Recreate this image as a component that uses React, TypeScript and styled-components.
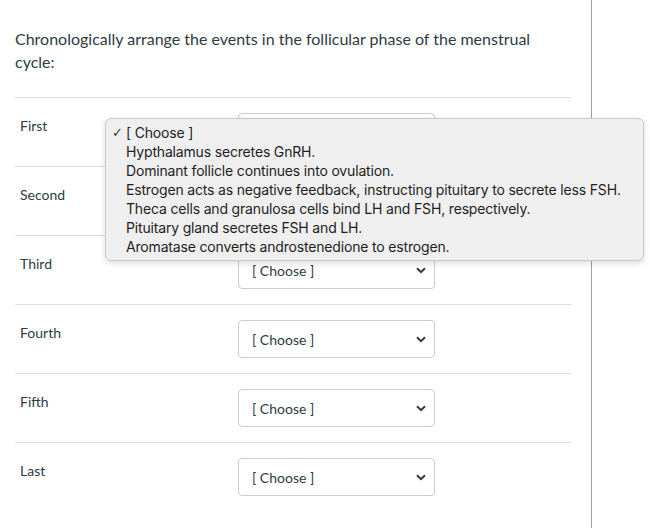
import React from "react";
import styled, { createGlobalStyle } from "styled-components";

const Global = createGlobalStyle`
  html, body { margin: 0; padding: 0; background: #fff; }
  body { font-family: Lato, "Liberation Sans", sans-serif; color: #2d3b45; }
`;

const Page = styled.div`
  position: relative;
  display: flex;
  height: 528px;
  overflow: hidden;
`;

const Main = styled.div`
  width: 556px;
  padding: 0 20px 0 15px;
  border-right: 1px solid #a0a0a0;
  flex: none;
`;

const Question = styled.p`
  margin: 27px 0 24px;
  font-size: 16px;
  line-height: 23px;
  color: #2d3b45;
`;

const Row = styled.div`
  display: flex;
  align-items: flex-start;
  border-top: 1px solid #dadde0;
  padding: 15px 0;
`;

const Label = styled.div`
  width: 218px;
  padding-left: 5px;
  margin-top: 3px;
  font-size: 14px;
  line-height: 20px;
  color: #2d3b45;
`;

const SelectBox = styled.div`
  box-sizing: border-box;
  width: 197px;
  height: 38px;
  display: flex;
  align-items: center;
  justify-content: space-between;
  padding: 0 8px 0 13px;
  border: 1px solid #c7cdd1;
  border-radius: 4px;
  background: #fff;
  font-size: 14px;
  color: #2d3b45;
`;

const Popup = styled.div`
  position: absolute;
  left: 105px;
  top: 118px;
  width: 539px;
  box-sizing: border-box;
  padding: 4px 0 4px 6px;
  background: #efefef;
  border: 1px solid #c9c9c9;
  border-radius: 6px;
  box-shadow: 0 2px 6px rgba(0, 0, 0, 0.15);
  font-family: Inter, "Noto Sans", sans-serif;
  font-size: 14px;
  letter-spacing: -0.17px;
  color: #1e1e1e;
`;

const Option = styled.div`
  display: flex;
  align-items: center;
  height: 19px;
  line-height: 19px;
  white-space: nowrap;
`;

const Check = styled.span`
  width: 14px;
  flex: none;
  font-size: 13px;
  font-family: "DejaVu Sans", sans-serif;
  color: #333;
`;

const Chevron = () => (
  <svg width="10" height="7" viewBox="0 0 10 7">
    <path d="M1 1.2 L5 5.2 L9 1.2" fill="none" stroke="#2d3b45" strokeWidth="2" />
  </svg>
);

const labels = ["First", "Second", "Third", "Fourth", "Fifth", "Last"];
const options = [
  "[ Choose ]",
  "Hypthalamus secretes GnRH.",
  "Dominant follicle continues into ovulation.",
  "Estrogen acts as negative feedback, instructing pituitary to secrete less FSH.",
  "Theca cells and granulosa cells bind LH and FSH, respectively.",
  "Pituitary gland secretes FSH and LH.",
  "Aromatase converts androstenedione to estrogen.",
];

export default function App() {
  return (
    <>
      <Global />
      <Page>
        <Main>
          <Question>
            Chronologically arrange the events in the follicular phase of the menstrual cycle:
          </Question>
          {labels.map((l) => (
            <Row key={l}>
              <Label>{l}</Label>
              <SelectBox>
                <span>[ Choose ]</span>
                <Chevron />
              </SelectBox>
            </Row>
          ))}
        </Main>
        <Popup>
          {options.map((o, i) => (
            <Option key={o}>
              <Check>{i === 0 ? "✓" : ""}</Check>
              {o}
            </Option>
          ))}
        </Popup>
      </Page>
    </>
  );
}
